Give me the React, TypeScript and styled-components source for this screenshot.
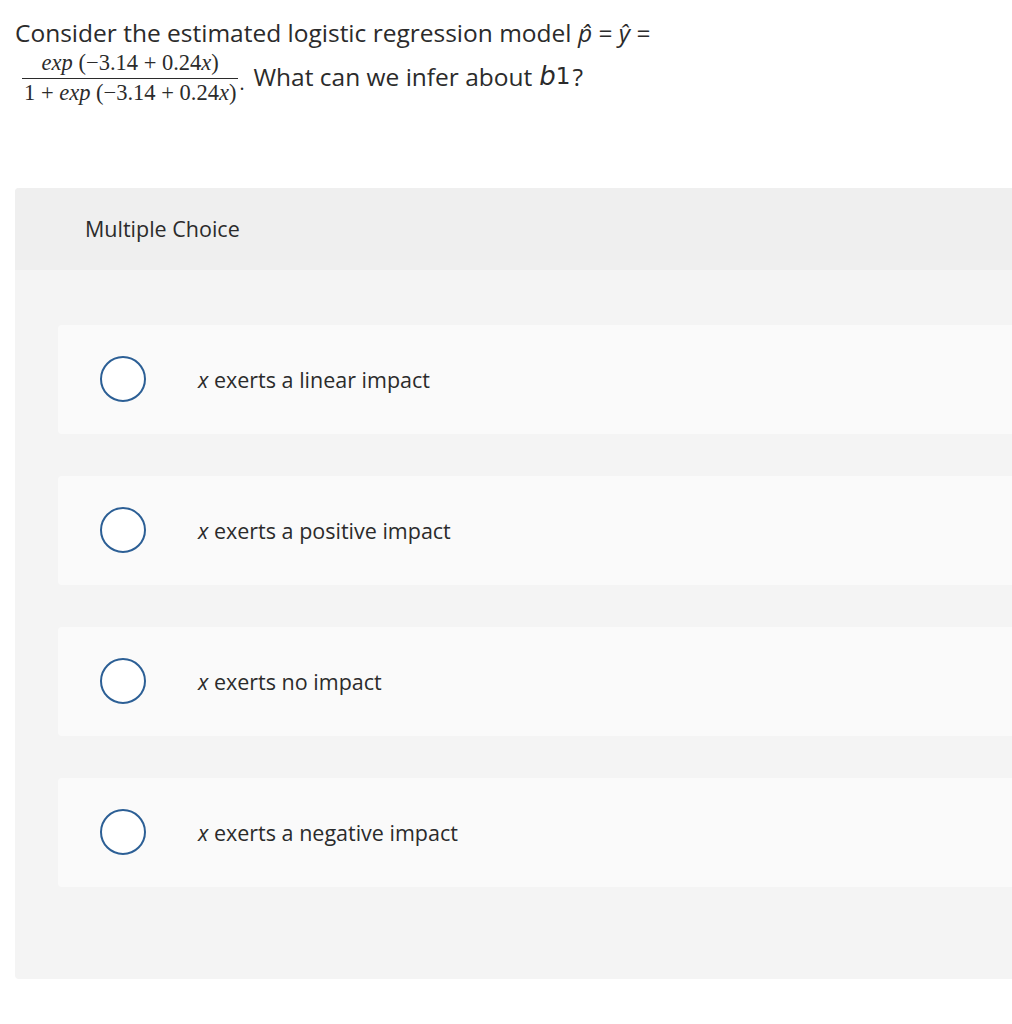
import React from 'react'
import styled, { createGlobalStyle } from 'styled-components'

const GlobalStyle = createGlobalStyle`
  html, body {
    margin: 0;
    padding: 0;
    background: #ffffff;
  }
  body {
    font-family: "Open Sans", "Noto Sans", sans-serif;
    color: #222222;
    overflow: hidden;
  }
`

const Page = styled.div`
  width: 1012px;
  padding: 18px 0 0 15px;
  box-sizing: border-box;
`

const Question = styled.div`
  font-size: 24.5px;
  line-height: 1.2;
  color: #2b2b2b;
`

const Line = styled.div`
  display: flex;
  align-items: center;
  white-space: nowrap;
`

const Hat = styled.span`
  font-style: italic;
`

const Fraction = styled.span`
  display: inline-flex;
  flex-direction: column;
  align-items: center;
  font-family: "Liberation Serif", "DejaVu Serif", serif;
  font-size: 22.5px;
  line-height: 1.1;
  color: #2b2b2b;
  margin: 4px 0 0 7px;
`

const Numerator = styled.span`
  padding: 0 2px 2px;
`

const Denominator = styled.span`
  border-top: 1px solid #2b2b2b;
  padding: 2px 2px 0;
`

const Var = styled.i`
  font-style: italic;
`

const Dot = styled.span`
  font-family: "Liberation Serif", serif;
  font-size: 20px;
  align-self: flex-end;
  margin: 0 9px 11px 1px;
`

const SubVar = styled.span`
  font-style: italic;
  font-family: "DejaVu Sans", sans-serif;
  font-size: 26px;
  margin-left: 7px;
`

const Sub = styled.sub`
  font-family: "DejaVu Sans", sans-serif;
  font-size: 23px;
  vertical-align: -6px;
  margin-right: 2px;
`

const Card = styled.section`
  margin-top: 82px;
  background: #f4f4f4;
  border-radius: 4px 0 0 4px;
  padding-bottom: 92px;
`

const CardHeader = styled.div`
  height: 82px;
  display: flex;
  align-items: center;
  padding-left: 70px;
  background: #efefef;
  border-radius: 4px 0 0 0;
  font-size: 21.5px;
  color: #2b2b2b;
`

const Options = styled.div`
  display: flex;
  flex-direction: column;
  gap: 42px;
  padding: 55px 0 0 43px;
`

const Option = styled.label`
  display: flex;
  align-items: center;
  height: 109px;
  background: #fafafa;
  border-radius: 4px 0 0 4px;
  padding-left: 42px;
  cursor: pointer;
`

const Radio = styled.span`
  width: 42px;
  height: 42px;
  border-radius: 50%;
  border: 2px solid #2c5f95;
  background: #ffffff;
  flex-shrink: 0;
`

const OptionText = styled.span`
  margin-left: 52px;
  font-size: 21.5px;
  color: #2b2b2b;
`

const options = ['a linear impact', 'a positive impact', 'no impact', 'a negative impact']

export default function App() {
  return (
    <>
      <GlobalStyle />
      <Page>
        <Question>
          <Line>
            Consider the estimated logistic regression model&nbsp;<Hat>p̂</Hat>&nbsp;=&nbsp;<Hat>ŷ</Hat>&nbsp;=
          </Line>
          <Line>
            <Fraction>
              <Numerator>
                <Var>exp</Var> (−3.14 + 0.24<Var>x</Var>)
              </Numerator>
              <Denominator>
                1 + <Var>exp</Var> (−3.14 + 0.24<Var>x</Var>)
              </Denominator>
            </Fraction>
            <Dot>.</Dot>
            What can we infer about
            <SubVar>b</SubVar>
            <Sub>1</Sub>?
          </Line>
        </Question>
        <Card>
          <CardHeader>Multiple Choice</CardHeader>
          <Options>
            {options.map((text) => (
              <Option key={text}>
                <Radio />
                <OptionText>
                  <Var>x</Var> exerts {text}
                </OptionText>
              </Option>
            ))}
          </Options>
        </Card>
      </Page>
    </>
  )
}
